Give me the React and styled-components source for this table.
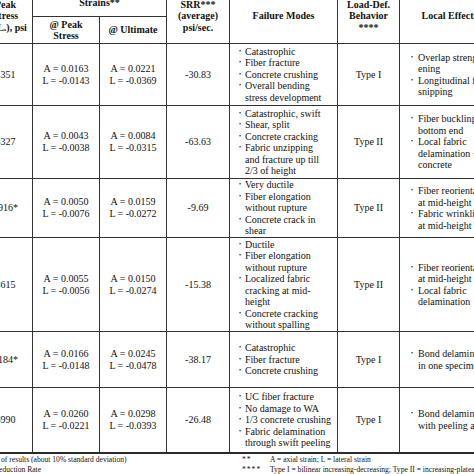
import React from "react";
import styled, { createGlobalStyle } from "styled-components";

const GlobalStyle = createGlobalStyle`
  html, body {
    margin: 0;
    padding: 0;
    background: #fff;
  }
`;

const Page = styled.div`
  width: 474px;
  height: 474px;
  overflow: hidden;
  background: #fff;
  color: #111;
  font-family: "Liberation Serif", "Times New Roman", serif;
`;

// the screenshot is a crop of a wider table, so the sheet starts off-page
const Sheet = styled.div`
  margin: -12px 0 0 -22px;
  width: 521px;
`;

const Table = styled.table`
  border-collapse: collapse;
  table-layout: fixed;
  width: 521px;
  font-size: 10px;
  line-height: 11.5px;
  border-bottom: 2px solid #2a2a2a;
`;

const Row = styled.tr`
  height: ${(p) => p.$h}px;
`;

const Head = styled.th`
  font-weight: 700;
  border: 1px solid #333;
  padding: 0;
  vertical-align: middle;
  text-align: center;
`;

const Cell = styled.td`
  border: 1px solid #333;
  padding: 0;
  vertical-align: middle;
  text-align: center;
  white-space: nowrap;
`;

const Line = styled.span`
  display: block;
  white-space: nowrap;
  line-height: ${(p) => p.$lh || 11.5}px;
`;

const List = styled.ul`
  margin: 0;
  padding: 0 0 0 ${(p) => p.$indent}px;
  list-style: none;
  text-align: left;
`;

const Item = styled.li`
  position: relative;

  &::before {
    content: "\u2022";
    position: absolute;
    left: ${(p) => p.$dot}px;
    top: 0;
    font-size: 6px;
    line-height: 11.5px;
  }
`;

const Notes = styled.div`
  display: grid;
  grid-template-columns: 28px 268px 28px 1fr;
  margin: 1px 0 0 -32px;
  font-size: 7.6px;
  line-height: 10px;
  white-space: nowrap;
`;

const Mark = styled.span`
  letter-spacing: 1px;
`;

const cols = [54, 67, 67, 63, 108, 62, 100];

const rows = [
  {
    h: 62,
    stress: "4351",
    peak: ["0.0163", "-0.0143"],
    ult: ["0.0221", "-0.0369"],
    srr: "-30.83",
    modes: [
      ["Catastrophic"],
      ["Fiber fracture"],
      ["Concrete crushing"],
      ["Overall bending", "stress development"],
    ],
    type: "Type I",
    effects: [
      ["Overlap strength-", "ening"],
      ["Longitudinal fiber", "snipping"],
    ],
  },
  {
    h: 73,
    stress: "5327",
    peak: ["0.0043", "-0.0038"],
    ult: ["0.0084", "-0.0315"],
    srr: "-63.63",
    modes: [
      ["Catastrophic, swift"],
      ["Shear, split"],
      ["Concrete cracking"],
      ["Fabric unzipping", "and fracture up till", "2/3 of height"],
    ],
    type: "Type II",
    effects: [
      ["Fiber buckling at", "bottom end"],
      ["Local fabric", "delamination +", "concrete"],
    ],
  },
  {
    h: 59,
    stress: "2916*",
    peak: ["0.0050", "-0.0076"],
    ult: ["0.0159", "-0.0272"],
    srr: "-9.69",
    modes: [
      ["Very ductile"],
      ["Fiber elongation", "without rupture"],
      ["Concrete crack in", "shear"],
    ],
    type: "Type II",
    effects: [
      ["Fiber reorientation", "at mid-height"],
      ["Fabric wrinkling", "at mid-height"],
    ],
  },
  {
    h: 94,
    stress: "3615",
    peak: ["0.0055", "-0.0056"],
    ult: ["0.0150", "-0.0274"],
    srr: "-15.38",
    modes: [
      ["Ductile"],
      ["Fiber elongation", "without rupture"],
      ["Localized fabric", "cracking at mid-", "height"],
      ["Concrete cracking", "without spalling"],
    ],
    type: "Type II",
    effects: [
      ["Fiber reorientation", "at mid-height"],
      ["Local fabric", "delamination"],
    ],
  },
  {
    h: 56,
    stress: "5184*",
    peak: ["0.0166", "-0.0148"],
    ult: ["0.0245", "-0.0478"],
    srr: "-38.17",
    modes: [["Catastrophic"], ["Fiber fracture"], ["Concrete crushing"]],
    type: "Type I",
    effects: [["Bond delamination", "in one specimen"]],
  },
  {
    h: 65,
    stress: "6990",
    peak: ["0.0260", "-0.0221"],
    ult: ["0.0298", "-0.0393"],
    srr: "-26.48",
    modes: [
      ["UC fiber fracture"],
      ["No damage to WA"],
      ["1/3 concrete crushing"],
      ["Fabric delamination", "through swift peeling"],
    ],
    type: "Type I",
    effects: [["Bond delamination", "with peeling at"]],
  },
];

const Strain = ({ pair }) => (
  <>
    <Line $lh={12}>A = {pair[0]}</Line>
    <Line $lh={12}>L = {pair[1]}</Line>
  </>
);

const Bullets = ({ items, indent, dot }) => (
  <List $indent={indent}>
    {items.map((lines, i) => (
      <Item key={i} $dot={dot}>
        {lines.map((t, j) => (
          <Line key={j}>{t}</Line>
        ))}
      </Item>
    ))}
  </List>
);

const App = () => {
  return (
    <Page>
      <GlobalStyle />
      <Sheet>
        <Table>
          <colgroup>
            {cols.map((w, i) => (
              <col key={i} style={{ width: w }} />
            ))}
          </colgroup>
          <thead>
            <Row $h={28}>
              <Head rowSpan={2}>
                <Line>Peak</Line>
                <Line>Stress</Line>
                <Line>(C.L.), psi</Line>
              </Head>
              <Head colSpan={2}>Strains**</Head>
              <Head rowSpan={2}>
                <Line>SRR***</Line>
                <Line>(average)</Line>
                <Line>psi/sec.</Line>
              </Head>
              <Head rowSpan={2}>Failure Modes</Head>
              <Head rowSpan={2}>
                <Line>Load-Def.</Line>
                <Line>Behavior</Line>
                <Line>****</Line>
              </Head>
              <Head rowSpan={2}>Local Effects</Head>
            </Row>
            <Row $h={27}>
              <Head>
                <Line>@ Peak</Line>
                <Line>Stress</Line>
              </Head>
              <Head>@ Ultimate</Head>
            </Row>
          </thead>
          <tbody>
            {rows.map((r, i) => (
              <Row key={i} $h={r.h}>
                <Cell>{r.stress}</Cell>
                <Cell>
                  <Strain pair={r.peak} />
                </Cell>
                <Cell>
                  <Strain pair={r.ult} />
                </Cell>
                <Cell>{r.srr}</Cell>
                <Cell>
                  <Bullets items={r.modes} indent={15} dot={-6} />
                </Cell>
                <Cell>{r.type}</Cell>
                <Cell>
                  <Bullets items={r.effects} indent={18} dot={-7} />
                </Cell>
              </Row>
            ))}
          </tbody>
        </Table>
        <Notes>
          <Mark>*</Mark>
          <span>Average of results (about 10% standard deviation)</span>
          <Mark>**</Mark>
          <span>A = axial strain; L = lateral strain</span>
          <Mark>***</Mark>
          <span>Stress Reduction Rate</span>
          <Mark>****</Mark>
          <span>
            Type I = bilinear increasing-decreasing; Type II = increasing-plateau
          </span>
        </Notes>
      </Sheet>
    </Page>
  );
};

export default App;
